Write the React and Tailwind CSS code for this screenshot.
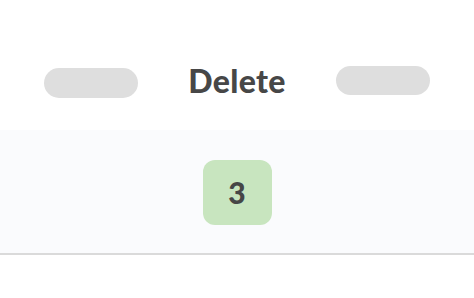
export default function App() {
  return (
    <div className="w-[474px] h-[298px] bg-white" style={{ fontFamily: 'Lato, "Open Sans", sans-serif' }}>
      <div className="h-[130px] flex items-start pt-[66px]">
        <div className="ml-[44px] mt-[2px] w-[94px] h-[30px] rounded-full bg-[#dedede]" />
        <div className="w-[198px] text-center text-[32px] leading-[30px] font-black text-[#474747] tracking-[0.3px]">
          Delete
        </div>
        <div className="w-[94px] h-[29px] rounded-full bg-[#dedede]" />
      </div>
      <div className="h-[125px] bg-[#fafbfd] border-b-2 border-[#dadada] flex justify-center pt-[30px]">
        <div className="w-[69px] h-[65px] rounded-[12px] bg-[#c8e5bf] flex items-center justify-center text-[30px] font-black text-[#464646]">
          3
        </div>
      </div>
    </div>
  )
}
